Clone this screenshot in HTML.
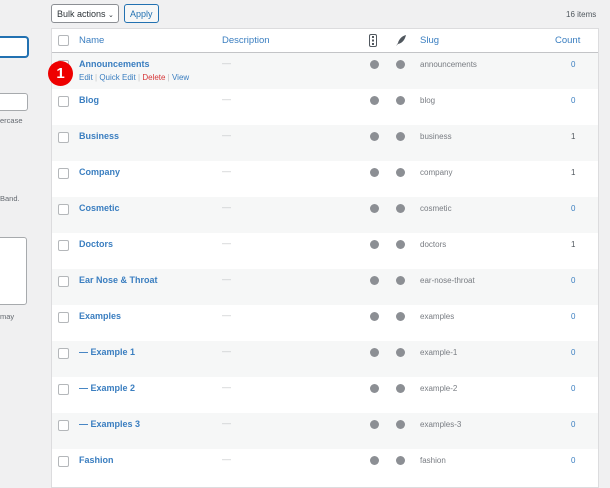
<!DOCTYPE html>
<html><head><meta charset="utf-8"><style>
*{box-sizing:border-box;margin:0;padding:0}
body{width:610px;height:468px;overflow:hidden;background:#f0f0f1;font-family:"Liberation Sans",sans-serif;position:relative;color:#50575e}
.a{position:absolute}
.inp{position:absolute;background:#fff;border:1px solid #a7aaad;border-radius:3px}
.sm{position:absolute;font-size:7.5px;color:#646970}
.tbl{position:absolute;left:51px;top:28px;width:548px;height:460px;background:#fff;border:1px solid #dcdcde}
.row{position:absolute;left:0;width:546px;height:36px}
.cb{position:absolute;left:6px;width:11px;height:11px;border:1px solid #b4b7ba;border-radius:2px;background:#fff}
.nm{position:absolute;left:27px;font-size:9px;font-weight:bold;color:#3a7ec0}
.ds{position:absolute;left:170px;font-size:9px;color:#c3c4c7}
.dot{position:absolute;width:9px;height:9px;border-radius:50%;background:#8c8f94}
.sl{position:absolute;left:368px;font-size:8px;color:#787c82}
.ct{position:absolute;left:519px;font-size:8px;color:#3a7ec0}
.hd{position:absolute;top:6px;font-size:9.5px;color:#3a7ec0}
</style></head><body>
<div class="inp" style="left:-5px;top:37px;width:33px;height:20px;border-color:#2271b1;box-shadow:0 0 0 1px #2271b1"></div>
<div class="inp" style="left:-5px;top:93px;width:33px;height:18px"></div>
<div class="sm" style="left:0;top:116px">ercase</div>
<div class="sm" style="left:0;top:194px">Band.</div>
<div class="inp" style="left:-5px;top:237px;width:32px;height:68px"></div>
<div class="sm" style="left:0;top:312px">may</div>
<div class="a" style="left:51px;top:4px;width:68px;height:19px;background:#fff;border:1px solid #8c8f94;border-radius:3px;font-size:9px;color:#2c3338;padding:4px 0 0 5px">Bulk actions <span style="font-size:7px">&#8964;</span></div>
<div class="a" style="left:124px;top:4px;width:35px;height:19px;background:#f6f7f7;border:1px solid #2271b1;border-radius:3px;font-size:9px;color:#2271b1;padding:4px 0 0 5px">Apply</div>
<div class="a" style="left:566px;top:10px;font-size:8px;color:#50575e">16 items</div>
<div class="tbl">
<div class="a" style="left:0;top:0;width:546px;height:24px;border-bottom:1px solid #c3c4c7"></div>
<div class="cb" style="top:6px"></div>
<div class="hd" style="left:27px">Name</div>
<div class="hd" style="left:170px">Description</div>
<div class="a" style="left:317px;top:5px;width:8px;height:13px;border:1px solid #50575e;border-radius:2px"><div style="margin:1px auto;width:2px;height:9px;background:repeating-linear-gradient(#50575e 0 2px,transparent 2px 3.5px)"></div></div>
<svg class="a" style="left:343px;top:5px" width="12" height="13" viewBox="0 0 12 13"><path d="M1 12 L3 9 C4 5 7 2 11 1 C10 5 8 9 3 10 Z" fill="#50575e"/></svg>
<div class="hd" style="left:368px">Slug</div>
<div class="hd" style="left:503px">Count</div>
<div id="rows"></div>
</div>
<div class="a" style="left:48px;top:61px;width:25px;height:25px;border-radius:50%;background:#e00;color:#fff;font-size:15px;font-weight:bold;text-align:center;line-height:25px">1</div>
<script>
var d=[["Announcements","announcements","0"],["Blog","blog","0"],["Business","business","1"],["Company","company","1"],["Cosmetic","cosmetic","0"],["Doctors","doctors","1"],["Ear Nose &amp; Throat","ear-nose-throat","0"],["Examples","examples","0"],["— Example 1","example-1","0"],["— Example 2","example-2","0"],["— Examples 3","examples-3","0"],["Fashion","fashion","0"]];
var h="";d.forEach(function(r,i){var t=24+36*i;h+='<div class="row" style="top:'+t+'px;background:'+(i%2?'#fff':'#f6f7f7')+'"><div class="cb" style="top:7px"></div><div class="nm" style="top:6px">'+r[0]+'</div><div class="ds" style="top:5px">—</div><div class="dot" style="left:318px;top:7px"></div><div class="dot" style="left:344px;top:7px"></div><div class="sl" style="top:7px">'+r[1]+'</div><div class="ct" style="top:7px;color:'+(r[2]=="1"?"#50575e":"#3a7ec0")+'">'+r[2]+'</div>'+(i==0?'<div style="position:absolute;left:27px;top:20px;font-size:8px;color:#3a7ec0">Edit <span style="color:#c3c4c7">|</span> Quick Edit <span style="color:#c3c4c7">|</span> <span style="color:#d63638">Delete</span> <span style="color:#c3c4c7">|</span> View</div>':'')+'</div>';});
document.getElementById("rows").innerHTML=h;
</script>
</body></html>
